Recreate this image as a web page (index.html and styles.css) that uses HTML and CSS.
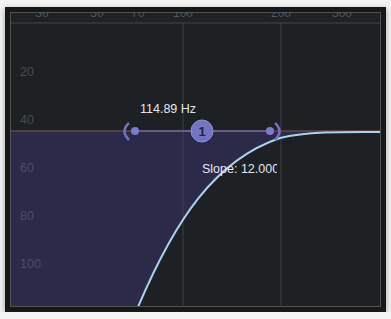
FILE: index.html
```html
<!DOCTYPE html>
<html lang="en">
<head>
    <meta charset="UTF-8">
    <meta name="viewport" content="width=device-width, initial-scale=1.0">
    <title>EQ Band</title>
    <link rel="stylesheet" href="styles.css">
</head>
<body>
    <div class="eq-frame">
        <svg class="eq-graph" width="371" height="295" viewBox="10 12 371 295">
            <defs>
                <clipPath id="plotClip">
                    <rect x="10" y="12" width="371" height="295"></rect>
                </clipPath>
                <clipPath id="slopeClip">
                    <rect x="190" y="150" width="87" height="30"></rect>
                </clipPath>
            </defs>

            <g clip-path="url(#plotClip)">
                <rect class="plot-bg" x="10" y="12" width="371" height="295"></rect>

                <!-- area above the high-pass curve -->
                <path class="band-fill" d="M10 131 L381 131 L381 132 C350 132, 310 131, 280 138 C215 160, 175 220, 138 307 L10 307 Z"></path>

                <!-- grid -->
                <line class="grid" x1="183" y1="23" x2="183" y2="307"></line>
                <line class="grid" x1="281" y1="23" x2="281" y2="307"></line>

                <!-- frequency ruler, mostly cut off at the top -->
                <rect class="ruler" x="10" y="12" width="371" height="11"></rect>
                <line class="ruler-line" x1="10" y1="23" x2="381" y2="23"></line>
                <g class="freq-label">
                    <text x="42" y="17">30</text>
                    <text x="97" y="17">50</text>
                    <text x="138" y="17">70</text>
                    <text x="183" y="17">100</text>
                    <text x="281" y="17">200</text>
                    <text x="342" y="17">500</text>
                </g>

                <!-- gain labels -->
                <g class="gain-label">
                    <text class="on-dark" x="20" y="76">20</text>
                    <text class="on-dark" x="20" y="124">40</text>
                    <text x="20" y="172">60</text>
                    <text x="20" y="220">80</text>
                    <text x="20" y="268">100</text>
                </g>

                <line class="zero-line" x1="10" y1="131" x2="381" y2="131"></line>

                <path class="curve" d="M138 307 C175 220, 215 160, 280 138 C310 131, 350 132, 381 132"></path>

                <!-- band handle -->
                <line class="handle-line" x1="135" y1="131" x2="270" y2="131"></line>
                <path class="bracket" d="M129 123 Q120 131 129 140"></path>
                <path class="bracket" d="M275 123 Q284 131 275 140"></path>
                <circle class="handle-dot" cx="135" cy="131" r="4"></circle>
                <circle class="handle-dot" cx="270" cy="131" r="4"></circle>
                <circle class="handle-node" cx="202" cy="131" r="11"></circle>
                <text class="handle-num" x="202" y="135.5">1</text>

                <text class="readout" x="140" y="113">114.89 Hz</text>
                <text class="readout" x="202" y="173" clip-path="url(#slopeClip)">Slope: 12.000</text>
            </g>

            <rect class="plot-border" x="10.5" y="12.5" width="370" height="294"></rect>
        </svg>
    </div>
</body>
</html>
```

FILE: styles.css
```css
* {
    margin: 0;
    padding: 0;
    box-sizing: border-box;
}

body {
    background-color: #f3f3f3;
    font-family: "Liberation Sans", Arial, sans-serif;
}

.eq-frame {
    width: 381px;
    height: 305px;
    margin: 7px 0 0 5px;
    padding: 5px;
    background: #171818;
    box-shadow: 0 2px 6px rgba(0, 0, 0, 0.35);
}

.eq-graph {
    display: block;
}

.plot-bg {
    fill: #1e2123;
}

.band-fill {
    fill: #2c2a49;
}

.grid {
    stroke: #3a3e44;
    stroke-width: 1;
}

.ruler {
    fill: #1f2224;
}

.ruler-line {
    stroke: #43474b;
    stroke-width: 1;
}

.freq-label text {
    fill: #52565a;
    font-size: 12px;
    text-anchor: middle;
}

.gain-label text {
    fill: #4d4a70;
    font-size: 12.5px;
}

.gain-label .on-dark {
    fill: #474b4f;
}

.zero-line {
    stroke: #664746;
    stroke-width: 1.5;
}

.curve {
    fill: none;
    stroke: #a9d3ec;
    stroke-width: 2;
}

.handle-line {
    stroke: #7b7bc9;
    stroke-width: 1.2;
}

.bracket {
    fill: none;
    stroke: #7272c4;
    stroke-width: 2.5;
}

.handle-dot {
    fill: #7b7bcc;
}

.handle-node {
    fill: #7474c4;
    stroke: #8e8ed8;
    stroke-width: 1;
}

.handle-num {
    fill: #24244a;
    font-size: 13px;
    font-weight: bold;
    text-anchor: middle;
}

.readout {
    fill: #e3e6f2;
    font-size: 12.5px;
}

.plot-border {
    fill: none;
    stroke: #505254;
    stroke-width: 1;
}
```
